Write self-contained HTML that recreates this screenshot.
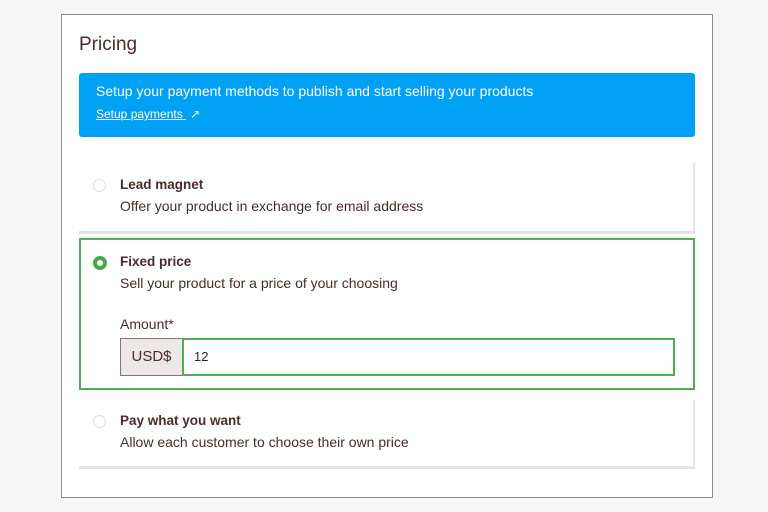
<!DOCTYPE html>
<html><head><style>
*{box-sizing:border-box;margin:0;padding:0}
body{width:768px;height:512px;background:#f7f7f7;font-family:"Liberation Sans",sans-serif;color:#4a2b27;position:relative;overflow:hidden}
.frame{position:absolute;left:61px;top:14px;width:652px;height:484px;background:#fff;border:1px solid #9a8784}
.abs{position:absolute}
h1{position:absolute;left:79px;top:34px;font-size:19px;font-weight:normal;color:#4a2b27}
.banner{left:79px;top:73px;width:616px;height:64px;background:#00a1f4;border-radius:3px;color:#fff}
.banner .t{position:absolute;left:17px;top:10px;font-size:14px}
.banner .l{position:absolute;left:17px;top:34px;font-size:12px;text-decoration:underline}
.card{left:79px;width:616px;border-right:2px solid #e6e6e6;border-bottom:3px solid #e3e3e3}
.radio{position:absolute;left:14px;width:13px;height:13px;border-radius:50%;border:1px solid #ddd;background:#fff}
.title{position:absolute;left:41px;font-size:13.5px;font-weight:bold}
.desc{position:absolute;left:41px;font-size:14px}
</style></head><body>
<div class="frame"></div>
<h1>Pricing</h1>
<div class="abs banner"><div class="t">Setup your payment methods to publish and start selling your products</div><div class="l">Setup payments <span style="text-decoration:none;display:inline-block;margin-left:4px">↗</span></div></div>

<div class="abs card" style="top:163px;height:71px">
<div class="radio" style="top:16px"></div>
<div class="title" style="top:14px">Lead magnet</div>
<div class="desc" style="top:35px">Offer your product in exchange for email address</div>
</div>

<div class="abs" style="left:79px;top:238px;width:616px;height:152px;border:2px solid #4caf50;background:#fff">
<div class="abs" style="left:12px;top:16px;width:14px;height:14px;border-radius:50%;background:#46a94b"><div class="abs" style="left:4px;top:4px;width:6px;height:6px;border-radius:50%;background:#fff"></div></div>
<div class="title" style="top:14px;left:39px">Fixed price</div>
<div class="desc" style="top:35px;left:39px">Sell your product for a price of your choosing</div>
<div class="desc" style="top:76px;left:39px">Amount*</div>
<div class="abs" style="left:39px;top:98px;width:63px;height:38px;background:#ece8e7;border:1px solid #8a7270;font-size:15px;line-height:36px;text-align:center">USD$</div>
<div class="abs" style="left:101px;top:98px;width:493px;height:38px;border:2px solid #4caf50;font-size:13px;line-height:34px;padding-left:10px;color:#3a2320">12</div>
</div>

<div class="abs card" style="top:400px;height:69px">
<div class="radio" style="top:15px"></div>
<div class="title" style="top:13px">Pay what you want</div>
<div class="desc" style="top:34px">Allow each customer to choose their own price</div>
</div>
</body></html>
